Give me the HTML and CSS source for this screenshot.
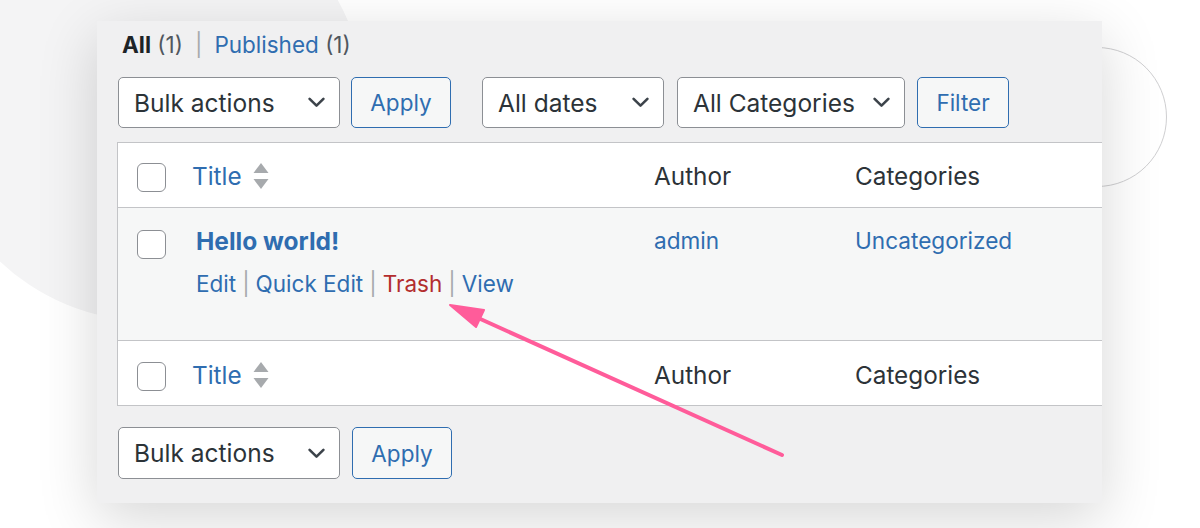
FILE: index.html
```html
<!DOCTYPE html>
<html lang="en">
<head>
<meta charset="utf-8">
<title>Posts</title>
<link rel="stylesheet" href="styles.css">
</head>
<body>
<div class="blob"></div>
<div class="ring"></div>
<main class="panel">
  <ul class="subsubsub">
    <li><b class="current">All</b> <span class="count">(1)</span></li>
    <li class="sep">|</li>
    <li><a class="link">Published</a> <span class="count">(1)</span></li>
  </ul>

  <div class="tablenav">
    <div class="select w-bulk"><span>Bulk actions</span><svg class="chev" viewBox="0 0 16 10"><path d="M1.5 1.5 L8 8 L14.5 1.5"/></svg></div>
    <button class="btn w-apply">Apply</button>
    <div class="select w-dates"><span>All dates</span><svg class="chev" viewBox="0 0 16 10"><path d="M1.5 1.5 L8 8 L14.5 1.5"/></svg></div>
    <div class="select w-cats"><span>All Categories</span><svg class="chev" viewBox="0 0 16 10"><path d="M1.5 1.5 L8 8 L14.5 1.5"/></svg></div>
    <button class="btn w-filter">Filter</button>
  </div>

  <div class="table">
    <div class="row head">
      <div class="cell check"><span class="cb"></span></div>
      <div class="cell title-h"><a class="link">Title</a><svg class="sort" viewBox="0 0 16 26"><path d="M8 0 L15.5 10 H0.5 Z"/><path d="M8 26 L15.5 16 H0.5 Z"/></svg></div>
      <div class="cell col">Author</div>
      <div class="cell col">Categories</div>
    </div>
    <div class="row post">
      <div class="cell check"><span class="cb"></span></div>
      <div class="cell title-c">
        <a class="link row-title">Hello world!</a>
        <div class="row-actions">
          <a class="link">Edit</a><span class="bar">|</span><a class="link">Quick Edit</a><span class="bar">|</span><a class="trash">Trash</a><span class="bar">|</span><a class="link">View</a>
        </div>
      </div>
      <div class="cell col"><a class="link">admin</a></div>
      <div class="cell col"><a class="link">Uncategorized</a></div>
    </div>
    <div class="row head foot">
      <div class="cell check"><span class="cb"></span></div>
      <div class="cell title-h"><a class="link">Title</a><svg class="sort" viewBox="0 0 16 26"><path d="M8 0 L15.5 10 H0.5 Z"/><path d="M8 26 L15.5 16 H0.5 Z"/></svg></div>
      <div class="cell col">Author</div>
      <div class="cell col">Categories</div>
    </div>
  </div>

  <div class="tablenav bottom">
    <div class="select w-bulk"><span>Bulk actions</span><svg class="chev" viewBox="0 0 16 10"><path d="M1.5 1.5 L8 8 L14.5 1.5"/></svg></div>
    <button class="btn w-apply">Apply</button>
  </div>
</main>
<svg class="arrow" viewBox="0 0 1200 528">
  <line x1="782" y1="455" x2="476" y2="317"/>
  <polygon points="450,305 476,327 484,310"/>
</svg>
</body>
</html>
```

FILE: styles.css
```css
* { box-sizing: border-box; }
html, body {
  margin: 0;
  padding: 0;
}
body {
  width: 1200px;
  height: 528px;
  overflow: hidden;
  position: relative;
  background: #ffffff;
  font-family: Inter, "Noto Sans", "Liberation Sans", sans-serif;
  color: #2c3338;
}

.blob {
  position: absolute;
  left: -67px;
  top: -111px;
  width: 432px;
  height: 432px;
  border-radius: 50%;
  background: #f4f4f5;
}
.ring {
  position: absolute;
  left: 1027px;
  top: 47px;
  width: 140px;
  height: 140px;
  border-radius: 50%;
  border: 1px solid #cfcfd1;
}

.panel {
  position: relative;
  margin: 21px 0 0 97px;
  width: 1005px;
  height: 482px;
  background: #f0f0f1;
  box-shadow: 0 16px 56px rgba(0, 0, 0, 0.16);
  overflow: hidden;
  padding-top: 8px;
}

.subsubsub {
  list-style: none;
  margin: 0 0 0 25px;
  padding: 0;
  display: flex;
  align-items: center;
  gap: 12px;
  height: 30px;
  font-size: 22.5px;
  color: #50575e;
}
.subsubsub li { white-space: nowrap; }
.current { color: #1d2327; font-weight: 700; }
.sep { color: #a7aaad; }

.link { color: #2f6db0; text-decoration: none; }
.trash { color: #b32d2e; }

.tablenav {
  margin: 18px 0 0 21px;
  display: flex;
  align-items: center;
  height: 51px;
}
.tablenav.bottom { margin-top: 21px; height: 52px; }

.select {
  height: 100%;
  background: #ffffff;
  border: 1.5px solid #8c8f94;
  border-radius: 5px;
  display: flex;
  align-items: center;
  justify-content: space-between;
  padding: 0 14px 0 15px;
  font-size: 24.5px;
  color: #2c3338;
}
.chev {
  width: 17px;
  height: 11px;
  fill: none;
  stroke: #3c434a;
  stroke-width: 2.4;
  stroke-linecap: round;
  stroke-linejoin: round;
}
.btn {
  height: 100%;
  background: #f6f7f7;
  border: 1.5px solid #2f6db0;
  border-radius: 5px;
  font-family: inherit;
  font-size: 22.5px;
  color: #2f6db0;
  padding: 0;
}
.w-bulk { width: 222px; }
.w-apply { width: 100px; margin-left: 11px; }
.bottom .w-apply { margin-left: 12px; }
.w-dates { width: 182px; margin-left: 31px; }
.w-cats { width: 228px; margin-left: 13px; }
.w-filter { width: 92px; margin-left: 12px; }

.table {
  margin: 14px 0 0 20px;
  width: 1010px;
  border: 1px solid #c3c4c7;
  background: #ffffff;
}
.row {
  display: grid;
  grid-template-columns: 66px 455px 201px 1fr;
  font-size: 24.3px;
}
.row.head { height: 64px; }
.row.post {
  height: 134px;
  background: #f6f7f7;
  border-top: 1px solid #c3c4c7;
  border-bottom: 1px solid #c3c4c7;
}
.cell { line-height: 30px; }
.check { padding: 21px 0 0 19px; }
.cb {
  display: block;
  width: 29px;
  height: 29px;
  border: 1.5px solid #8c8f94;
  border-radius: 6px;
  background: #ffffff;
}
.head .cell { padding-top: 18px; }
.head .check { padding-top: 20px; }
.foot .cell { padding-top: 19px; }
.foot .check { padding-top: 21px; }
.title-h {
  padding-left: 8px;
  display: flex;
  align-items: flex-start;
}
.sort {
  width: 16px;
  height: 26px;
  margin: 2px 0 0 11px;
  fill: #a7aaad;
}
.col { padding-left: 15px; color: #2c3338; }
.post .col { font-size: 22.6px; }
.post .cell { padding-top: 18px; }
.post .check { padding-top: 22px; }
.title-c { padding-left: 12px; }
.row-title { font-weight: 700; font-size: 24.5px; }
.row-actions {
  margin-top: 13px;
  font-size: 22.5px;
  display: flex;
  align-items: center;
}
.bar { color: #a7aaad; margin: 0 6px; }

.arrow {
  position: absolute;
  left: 0;
  top: 0;
  width: 1200px;
  height: 528px;
  pointer-events: none;
}
.arrow line {
  stroke: #ff5c9a;
  stroke-width: 4;
  stroke-linecap: round;
}
.arrow polygon {
  fill: #ff5c9a;
  stroke: #ff5c9a;
  stroke-width: 2;
  stroke-linejoin: round;
}
```
